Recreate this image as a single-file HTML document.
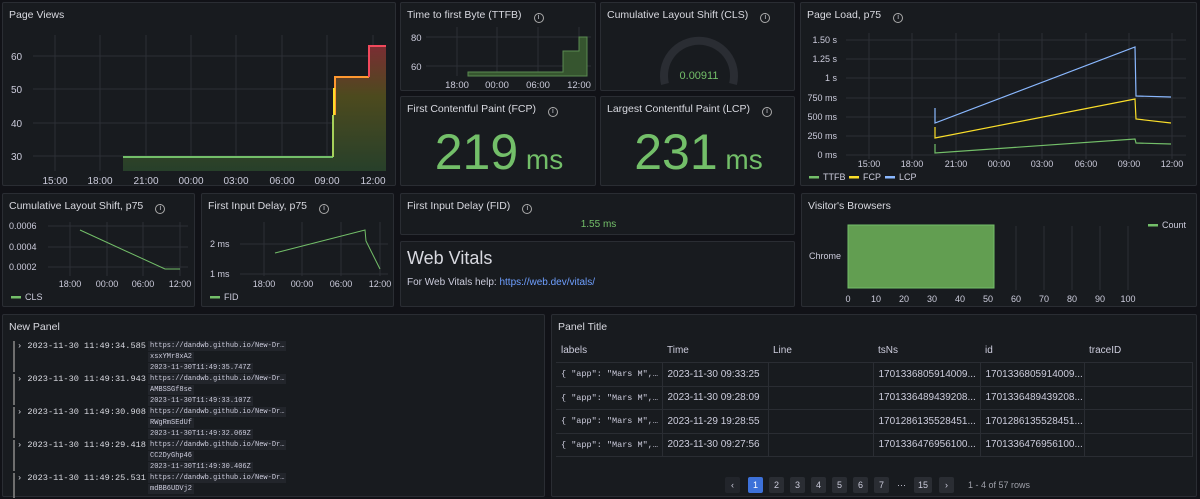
<!DOCTYPE html><html><head><style>
*{margin:0;padding:0;box-sizing:border-box}
body{width:1200px;height:499px;background:#111217;font-family:"Liberation Sans",sans-serif;color:#ccccdc;position:relative;overflow:hidden;font-size:11px}
.p{position:absolute;background:#181b1f;border:1px solid #2a2d33;border-radius:2px}
.t{position:absolute;left:6px;top:6px;font-size:10.5px;color:#d8d9e0}
.i{display:inline-block;width:10px;height:10px;border:1px solid #aaa;border-radius:50%;margin-left:12px;vertical-align:-1px;font-size:7px;text-align:center;line-height:8px}
svg{position:absolute;left:0;top:0}
.mono{font-family:"Liberation Mono",monospace}
.g{color:#73bf69}
.log{position:absolute;left:10px;width:2px;background:#6e6e6e}
.lt{position:absolute;left:14px;font-family:"Liberation Mono",monospace;font-size:8.6px;color:#d8d9e0}
.lu{position:absolute;left:145px;font-family:"Liberation Mono",monospace;font-size:7px;color:#ccccdc;background:#22252b;padding:1px 2px}
table{position:absolute;left:4px;top:24px;border-collapse:collapse;font-size:10px;table-layout:fixed;width:636px}
td{height:23.5px;padding-left:5px;border-right:1px solid #2a2d33;border-bottom:1px solid #2a2d33;white-space:nowrap;overflow:hidden}
tr:first-child td{border-right:none}
.pg{position:absolute;top:162px;width:15px;height:16px;background:#2a2d33;border-radius:2px;font-size:9px;text-align:center;line-height:16px}
</style></head><body>

<div class="p" style="left:2px;top:2px;width:394px;height:184px"><div class="t">Page Views</div>
<svg width="394" height="184" font-size="10" fill="#ccccdc">
<defs><linearGradient id="pv" x1="0" y1="0" x2="0" y2="1"><stop offset="0" stop-color="#7a2d33"/><stop offset=".4" stop-color="#4d4a1e"/><stop offset="1" stop-color="#27402a"/></linearGradient></defs>
<g stroke="#2c2f35"><line x1="52" y1="32" x2="52" y2="168"/><line x1="97" y1="32" x2="97" y2="168"/><line x1="143" y1="32" x2="143" y2="168"/><line x1="188" y1="32" x2="188" y2="168"/><line x1="233" y1="32" x2="233" y2="168"/><line x1="279" y1="32" x2="279" y2="168"/><line x1="324" y1="32" x2="324" y2="168"/><line x1="370" y1="32" x2="370" y2="168"/><line x1="30" y1="53" x2="383" y2="53"/><line x1="30" y1="86" x2="383" y2="86"/><line x1="30" y1="120" x2="383" y2="120"/><line x1="30" y1="153" x2="383" y2="153"/></g>
<path d="M120 154H330V112H332V74H366V43H383V168H120Z" fill="url(#pv)"/>
<path d="M120 154H330" stroke="#73bf69" stroke-width="2" fill="none"/>
<path d="M330 154V112" stroke="#a6d05a" stroke-width="2"/><path d="M332 112V74H366" stroke="#ff9830" stroke-width="2" fill="none"/><path d="M331 112V85" stroke="#fade2a" stroke-width="2"/>
<path d="M366 74V43H383" stroke="#f2495c" stroke-width="2" fill="none"/>
<text x="8" y="57">60</text><text x="8" y="90">50</text><text x="8" y="124">40</text><text x="8" y="157">30</text>
<g text-anchor="middle"><text x="52" y="181">15:00</text><text x="97" y="181">18:00</text><text x="143" y="181">21:00</text><text x="188" y="181">00:00</text><text x="233" y="181">03:00</text><text x="279" y="181">06:00</text><text x="324" y="181">09:00</text><text x="370" y="181">12:00</text></g>
</svg></div>

<div class="p" style="left:400px;top:2px;width:196px;height:89px"><div class="t">Time to first Byte (TTFB)<span class="i">i</span></div>
<svg width="196" height="89" font-size="9.5" fill="#ccccdc"><g stroke="#2c2f35"><line x1="56" y1="24" x2="56" y2="73"/><line x1="96" y1="24" x2="96" y2="73"/><line x1="137" y1="24" x2="137" y2="73"/><line x1="178" y1="24" x2="178" y2="73"/><line x1="25" y1="34" x2="190" y2="34"/><line x1="25" y1="63" x2="190" y2="63"/></g>
<path d="M67 69H162V48H178V34H186V73H67Z" fill="#36552f" stroke="#5a8a50"/>
<text x="10" y="38">80</text><text x="10" y="67">60</text><g text-anchor="middle"><text x="56" y="85">18:00</text><text x="96" y="85">00:00</text><text x="137" y="85">06:00</text><text x="178" y="85">12:00</text></g></svg></div>

<div class="p" style="left:600px;top:2px;width:195px;height:89px"><div class="t">Cumulative Layout Shift (CLS)<span class="i">i</span></div>
<svg width="195" height="89"><path d="M64 81A35 35 0 1 1 132 81" stroke="#2a2d33" stroke-width="8" fill="none"/><text x="98" y="76" text-anchor="middle" font-size="11" fill="#73bf69">0.00911</text></svg></div>

<div class="p" style="left:400px;top:96px;width:196px;height:90px"><div class="t">First Contentful Paint (FCP)<span class="i">i</span></div>
<div style="position:absolute;left:0;width:196px;top:26px;text-align:center;color:#73bf69;font-size:50px">219<span style="font-size:28px"> ms</span></div></div>
<div class="p" style="left:600px;top:96px;width:195px;height:90px"><div class="t">Largest Contentful Paint (LCP)<span class="i">i</span></div>
<div style="position:absolute;left:0;width:195px;top:26px;text-align:center;color:#73bf69;font-size:50px">231<span style="font-size:28px"> ms</span></div></div>

<div class="p" style="left:800px;top:2px;width:397px;height:184px"><div class="t">Page Load, p75<span class="i">i</span></div>
<svg width="397" height="184" font-size="9" fill="#ccccdc"><g stroke="#2c2f35"><line x1="68" y1="30" x2="68" y2="156"/><line x1="111" y1="30" x2="111" y2="156"/><line x1="155" y1="30" x2="155" y2="156"/><line x1="198" y1="30" x2="198" y2="156"/><line x1="241" y1="30" x2="241" y2="156"/><line x1="285" y1="30" x2="285" y2="156"/><line x1="328" y1="30" x2="328" y2="156"/><line x1="371" y1="30" x2="371" y2="156"/><line x1="45" y1="37" x2="385" y2="37"/><line x1="45" y1="56" x2="385" y2="56"/><line x1="45" y1="75" x2="385" y2="75"/><line x1="45" y1="95" x2="385" y2="95"/><line x1="45" y1="114" x2="385" y2="114"/><line x1="45" y1="133" x2="385" y2="133"/><line x1="45" y1="152" x2="385" y2="152"/></g>
<g fill="none" stroke-width="1.2"><path d="M134 105V120L334 44L335 93L370 94" stroke="#8ab8ff"/><path d="M134 124V135L334 96L335 116L370 120" stroke="#fade2a"/><path d="M134 141V150L334 136L335 140L370 141" stroke="#73bf69"/></g>
<g text-anchor="end"><text x="36" y="40">1.50 s</text><text x="36" y="59">1.25 s</text><text x="36" y="78">1 s</text><text x="36" y="98">750 ms</text><text x="36" y="117">500 ms</text><text x="36" y="136">250 ms</text><text x="36" y="155">0 ms</text></g>
<g text-anchor="middle"><text x="68" y="164">15:00</text><text x="111" y="164">18:00</text><text x="155" y="164">21:00</text><text x="198" y="164">00:00</text><text x="241" y="164">03:00</text><text x="285" y="164">06:00</text><text x="328" y="164">09:00</text><text x="371" y="164">12:00</text></g>
<rect x="8" y="173" width="10" height="2.5" fill="#73bf69"/><text x="22" y="177">TTFB</text><rect x="48" y="173" width="10" height="2.5" fill="#fade2a"/><text x="62" y="177">FCP</text><rect x="84" y="173" width="10" height="2.5" fill="#8ab8ff"/><text x="98" y="177">LCP</text></svg></div>

<div class="p" style="left:2px;top:193px;width:193px;height:114px"><div class="t">Cumulative Layout Shift, p75<span class="i">i</span></div>
<svg width="193" height="114" font-size="9" fill="#ccccdc"><g stroke="#2c2f35"><line x1="67" y1="28" x2="67" y2="82"/><line x1="104" y1="28" x2="104" y2="82"/><line x1="140" y1="28" x2="140" y2="82"/><line x1="177" y1="28" x2="177" y2="82"/><line x1="45" y1="32" x2="185" y2="32"/><line x1="45" y1="53" x2="185" y2="53"/><line x1="45" y1="73" x2="185" y2="73"/></g>
<path d="M77 36L162 75H177" stroke="#73bf69" fill="none"/>
<text x="6" y="35">0.0006</text><text x="6" y="56">0.0004</text><text x="6" y="76">0.0002</text><g text-anchor="middle"><text x="67" y="93">18:00</text><text x="104" y="93">00:00</text><text x="140" y="93">06:00</text><text x="177" y="93">12:00</text></g>
<rect x="8" y="102" width="10" height="2.5" fill="#73bf69"/><text x="22" y="106">CLS</text></svg></div>

<div class="p" style="left:201px;top:193px;width:193px;height:114px"><div class="t">First Input Delay, p75<span class="i">i</span></div>
<svg width="193" height="114" font-size="9" fill="#ccccdc"><g stroke="#2c2f35"><line x1="62" y1="28" x2="62" y2="82"/><line x1="100" y1="28" x2="100" y2="82"/><line x1="139" y1="28" x2="139" y2="82"/><line x1="178" y1="28" x2="178" y2="82"/><line x1="38" y1="50" x2="186" y2="50"/><line x1="38" y1="80" x2="186" y2="80"/></g>
<path d="M73 59L163 36L164 47L178 75" stroke="#73bf69" fill="none"/>
<text x="8" y="53">2 ms</text><text x="8" y="83">1 ms</text><g text-anchor="middle"><text x="62" y="93">18:00</text><text x="100" y="93">00:00</text><text x="139" y="93">06:00</text><text x="178" y="93">12:00</text></g>
<rect x="8" y="102" width="10" height="2.5" fill="#73bf69"/><text x="22" y="106">FID</text></svg></div>

<div class="p" style="left:400px;top:193px;width:395px;height:42px"><div class="t">First Input Delay (FID)<span class="i">i</span></div>
<div class="g" style="position:absolute;left:0;width:395px;top:25px;text-align:center;font-size:10px">1.55 ms</div></div>
<div class="p" style="left:400px;top:241px;width:395px;height:66px">
<div style="position:absolute;left:6px;top:6px;font-size:18px;color:#d8d9e0">Web Vitals</div>
<div style="position:absolute;left:6px;top:35px;font-size:10px">For Web Vitals help: <span style="color:#6e9fff">https://web.dev/vitals/</span></div></div>

<div class="p" style="left:801px;top:193px;width:396px;height:114px"><div class="t">Visitor's Browsers</div>
<svg width="396" height="114" font-size="9" fill="#ccccdc"><g stroke="#2c2f35"><line x1="214" y1="32" x2="214" y2="96"/><line x1="242" y1="32" x2="242" y2="96"/><line x1="270" y1="32" x2="270" y2="96"/><line x1="298" y1="32" x2="298" y2="96"/><line x1="326" y1="32" x2="326" y2="96"/></g>
<rect x="46" y="31" width="146" height="63" fill="#629e51" stroke="#73bf69"/>
<text x="7" y="65">Chrome</text>
<g text-anchor="middle"><text x="46" y="108">0</text><text x="74" y="108">10</text><text x="102" y="108">20</text><text x="130" y="108">30</text><text x="158" y="108">40</text><text x="186" y="108">50</text><text x="214" y="108">60</text><text x="242" y="108">70</text><text x="270" y="108">80</text><text x="298" y="108">90</text><text x="326" y="108">100</text></g>
<rect x="346" y="30" width="10" height="2.5" fill="#73bf69"/><text x="360" y="34">Count</text></svg></div>

<div class="p" style="left:2px;top:314px;width:543px;height:183px"><div class="t">New Panel</div>
<div class="log" style="top:26px;height:31px"></div><div class="lt" style="top:26px">› 2023-11-30 11:49:34.585</div><div class="lu" style="top:26px">https://dandwb.github.io/New-Dr…</div><div class="lu" style="top:37px">xsxYMr8xA2</div><div class="lu" style="top:48px">2023-11-30T11:49:35.747Z</div>
<div class="log" style="top:59px;height:31px"></div><div class="lt" style="top:59px">› 2023-11-30 11:49:31.943</div><div class="lu" style="top:59px">https://dandwb.github.io/New-Dr…</div><div class="lu" style="top:70px">AMBSSGf8se</div><div class="lu" style="top:81px">2023-11-30T11:49:33.107Z</div>
<div class="log" style="top:92px;height:31px"></div><div class="lt" style="top:92px">› 2023-11-30 11:49:30.908</div><div class="lu" style="top:92px">https://dandwb.github.io/New-Dr…</div><div class="lu" style="top:103px">RWgRmSEdUf</div><div class="lu" style="top:114px">2023-11-30T11:49:32.069Z</div>
<div class="log" style="top:125px;height:31px"></div><div class="lt" style="top:125px">› 2023-11-30 11:49:29.418</div><div class="lu" style="top:125px">https://dandwb.github.io/New-Dr…</div><div class="lu" style="top:136px">CC2DyGhp46</div><div class="lu" style="top:147px">2023-11-30T11:49:30.406Z</div>
<div class="log" style="top:158px;height:25px"></div><div class="lt" style="top:158px">› 2023-11-30 11:49:25.531</div><div class="lu" style="top:158px">https://dandwb.github.io/New-Dr…</div><div class="lu" style="top:169px">mdBB6UDVj2</div>
</div>

<div class="p" style="left:551px;top:314px;width:646px;height:183px"><div class="t">Panel Title</div>
<table><colgroup><col style="width:106px"><col style="width:106px"><col style="width:105px"><col style="width:107px"><col style="width:104px"><col style="width:108px"></colgroup>
<tr><td>labels</td><td>Time</td><td>Line</td><td>tsNs</td><td>id</td><td>traceID</td></tr>
<tr><td class="mono" style="font-size:8.5px">{ "app": "Mars M",…</td><td>2023-11-30 09:33:25</td><td></td><td>1701336805914009...</td><td>1701336805914009...</td><td></td></tr>
<tr><td class="mono" style="font-size:8.5px">{ "app": "Mars M",…</td><td>2023-11-30 09:28:09</td><td></td><td>1701336489439208...</td><td>1701336489439208...</td><td></td></tr>
<tr><td class="mono" style="font-size:8.5px">{ "app": "Mars M",…</td><td>2023-11-29 19:28:55</td><td></td><td>1701286135528451...</td><td>1701286135528451...</td><td></td></tr>
<tr><td class="mono" style="font-size:8.5px">{ "app": "Mars M",…</td><td>2023-11-30 09:27:56</td><td></td><td>1701336476956100...</td><td>1701336476956100...</td><td></td></tr></table>
<div class="pg" style="left:173px;background:#22252b">‹</div><div class="pg" style="left:196px;background:#3d71d9;color:#fff">1</div><div class="pg" style="left:217px">2</div><div class="pg" style="left:238px">3</div><div class="pg" style="left:259px">4</div><div class="pg" style="left:280px">5</div><div class="pg" style="left:301px">6</div><div class="pg" style="left:322px">7</div><div class="pg" style="left:342px;background:none">···</div><div class="pg" style="left:362px;width:18px">15</div><div class="pg" style="left:387px">›</div>
<div style="position:absolute;left:416px;top:165px;font-size:9px;color:#9fa1aa">1 - 4 of 57 rows</div>
</div>
</body></html>
